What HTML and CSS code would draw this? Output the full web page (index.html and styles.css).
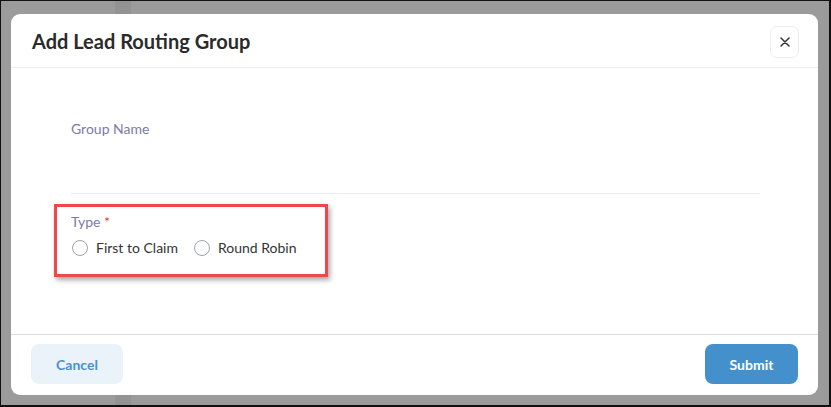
FILE: index.html
```html
<!DOCTYPE html>
<html>
<head>
<meta charset="utf-8">
<link rel="stylesheet" href="styles.css">
</head>
<body>
<div class="frame">
  <div class="modal">
    <div class="modal-header">
      <h2 class="title">Add Lead Routing Group</h2>
      <button class="close" aria-label="Close">
        <svg width="10" height="10" viewBox="0 0 10 10"><path d="M1 1L9 9M9 1L1 9" stroke="#333" stroke-width="1.5" stroke-linecap="round"/></svg>
      </button>
    </div>
    <div class="modal-body">
      <div class="field">
        <label class="label">Group Name</label>
        <div class="input"></div>
      </div>
      <div class="highlight">
        <div class="label">Type <span class="req">*</span></div>
        <div class="radios">
          <label class="radio"><span class="circle"></span>First to Claim</label>
          <label class="radio"><span class="circle"></span>Round Robin</label>
        </div>
      </div>
    </div>
    <div class="modal-footer">
      <button class="btn cancel">Cancel</button>
      <button class="btn submit">Submit</button>
    </div>
  </div>
</div>
</body>
</html>
```

FILE: styles.css
```css
html, body {
  margin: 0;
  padding: 0;
}
body {
  width: 831px;
  height: 407px;
  overflow: hidden;
  font-family: Lato, "Open Sans", sans-serif;
}
.frame {
  box-sizing: border-box;
  width: 831px;
  height: 407px;
  border-style: solid;
  border-color: #111;
  border-width: 1px 2px 2px 1px;
  background: linear-gradient(to right, #9b9b9b 0, #9b9b9b 114px, #939393 114px, #939393 130px, #9b9b9b 130px);
  padding: 13px 0 0 10px;
}
.modal {
  width: 807px;
  height: 381px;
  background: #fff;
  border-radius: 9px;
  display: flex;
  flex-direction: column;
  overflow: hidden;
}
.modal-header {
  height: 53px;
  border-bottom: 1px solid #ececec;
  display: flex;
  align-items: center;
  justify-content: space-between;
  padding: 0 19px 0 21px;
}
.title {
  margin: 0;
  font-size: 20px;
  font-weight: 700;
  color: #2b2b2b;
  letter-spacing: 0;
}
.close {
  width: 29px;
  height: 32px;
  border: 1px solid #ededed;
  border-radius: 7px;
  background: #fff;
  display: flex;
  align-items: center;
  justify-content: center;
  padding: 0;
  margin-top: 2px;
}
.modal-body {
  height: 266px;
  box-sizing: border-box;
  padding: 52px 58px 0 60px;
}
.label {
  display: block;
  font-size: 14px;
  line-height: 17px;
  color: #7a7ca5;
}
.input {
  height: 56px;
  border-bottom: 1px solid #ececec;
}
.highlight {
  box-sizing: border-box;
  width: 274px;
  height: 73px;
  margin: 10px 0 0 -17px;
  border: 3px solid #f0474a;
  box-shadow: 2px 3px 5px rgba(0, 0, 0, 0.35);
  padding: 6px 0 0 14px;
}
.req {
  color: #e0413d;
}
.radios {
  display: flex;
  gap: 15px;
  margin-top: 9px;
}
.radio {
  display: flex;
  align-items: center;
  font-size: 14px;
  line-height: 18px;
  color: #333;
}
.circle {
  box-sizing: border-box;
  width: 16px;
  height: 16px;
  border: 1px solid #9ea3ad;
  border-radius: 50%;
  margin-right: 8px;
  margin-left: 1px;
}
.modal-footer {
  flex: 1;
  border-top: 1px solid #dcdcdc;
  display: flex;
  justify-content: space-between;
  align-items: flex-start;
  padding: 9px 20px 0 20px;
}
.btn {
  height: 40px;
  border: none;
  border-radius: 8px;
  font-family: Lato, "Open Sans", sans-serif;
  font-size: 14px;
  font-weight: 700;
}
.cancel {
  width: 92px;
  background: #ebf3fa;
  color: #4a90d2;
}
.submit {
  width: 93px;
  background: #4490cc;
  color: #fff;
}
```
